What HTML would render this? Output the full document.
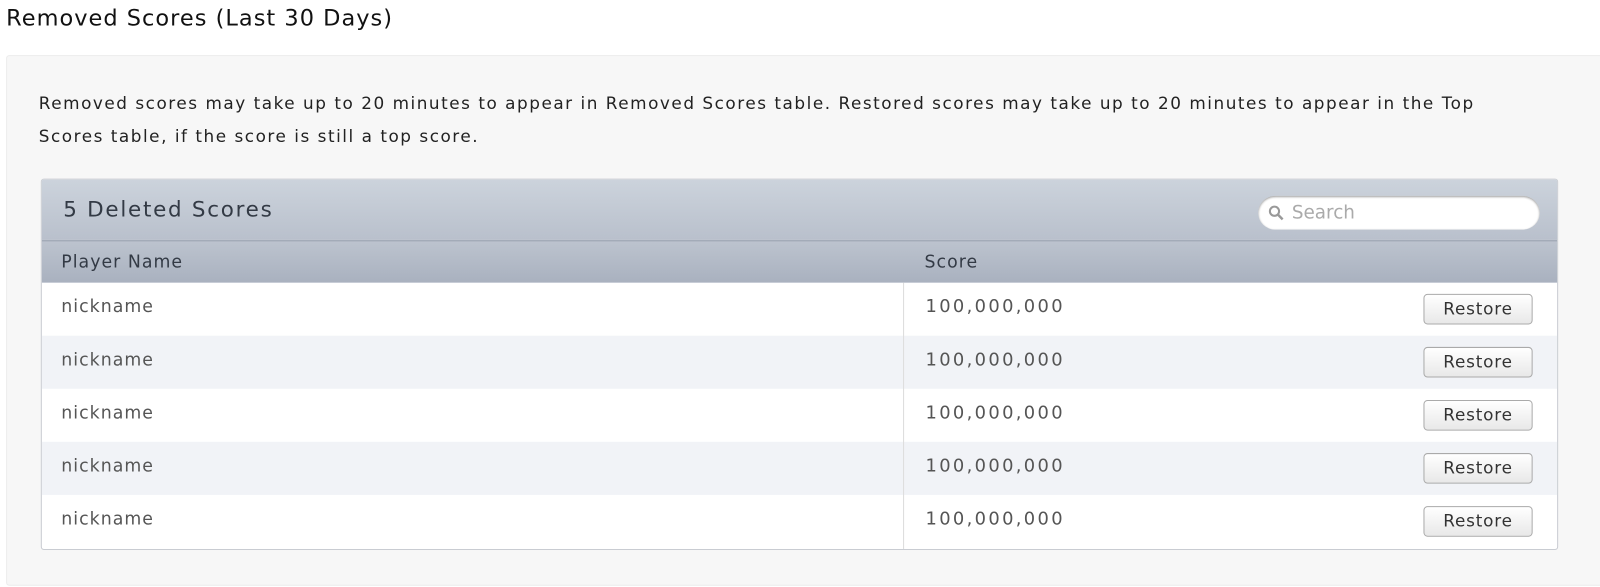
<!DOCTYPE html>
<html><head><meta charset="utf-8"><style>
*{box-sizing:border-box;margin:0;padding:0}
body{width:1600px;height:586px;background:#fff;font-family:"DejaVu Sans","Liberation Sans",sans-serif;position:relative;overflow:hidden}
#w{position:absolute;left:0;top:0;width:1568px;height:575px;transform:scale(1.0204);transform-origin:0 0}
h1{position:absolute;left:6px;top:6px;font-size:22px;font-weight:normal;color:#111;letter-spacing:1px}
.panel{position:absolute;left:6px;top:54px;width:1588px;height:520px;background:#f7f7f7;border:1px solid #ececec;border-radius:3px}
.desc{position:absolute;left:38px;top:86px;white-space:nowrap;font-size:16.5px;line-height:32px;color:#222;letter-spacing:1.5px}
.table{position:absolute;left:40px;top:175px;width:1487px;height:364px;border:1px solid #c9ccd2;border-radius:3px;background:#fff;overflow:hidden}
.hdr{height:61px;background:linear-gradient(#ccd3dc,#b9c0cc);border-bottom:2px solid #a3abb8;position:relative}
.hdr .t{position:absolute;left:21px;top:17px;font-size:21px;color:#333a45;letter-spacing:1.7px}
.search{position:absolute;left:1192px;top:16px;width:276px;height:33px;background:#fff;border-radius:17px;box-shadow:inset 0 1px 2px #999;font-size:18px;color:#aaa;padding:6px 0 0 33px}
.search svg{position:absolute;left:10px;top:9px}
.ch{height:40px;background:linear-gradient(#bcc3ce,#a9b1bf);position:relative;font-size:17px;color:#333a45;letter-spacing:1px}
.ch span{position:absolute;top:10px}
.row{height:52px;position:relative;font-size:17px;color:#555;letter-spacing:1px}
.row:nth-child(even){background:#f1f3f7}
.row span{position:absolute;top:14px}
.row span.n{letter-spacing:2.3px;font-size:17.5px}
.div{position:absolute;left:844px;top:101px;bottom:0;width:1px;background:#ddd}
.btn{position:absolute;left:1354px;top:11px;width:107px;height:30px;border:1px solid #aaa;border-radius:4px;background:linear-gradient(#fff,#e8e8e8);font-size:16.5px;color:#333;text-align:center;line-height:28px;letter-spacing:0.8px}
</style></head><body><div id="w">
<h1>Removed Scores (Last 30 Days)</h1>
<div class="panel"></div>
<div class="desc">Removed scores may take up to 20 minutes to appear in Removed Scores table. Restored scores may take up to 20 minutes to appear in the Top<br>Scores table, if the score is still a top score.</div>
<div class="table">
<div class="hdr"><div class="t">5 Deleted Scores</div>
<div class="search"><svg width="16" height="16" viewBox="0 0 16 16"><circle cx="6" cy="6" r="4.5" fill="none" stroke="#999" stroke-width="2"/><path d="M9.5 9.5L14 14" stroke="#999" stroke-width="2.4"/></svg>Search</div></div>
<div class="ch"><span style="left:19px">Player Name</span><span style="left:865px">Score</span></div>
<div>
<div class="row"><span style="left:19px">nickname</span><span class="n" style="left:866px">100,000,000</span><div class="btn">Restore</div></div>
<div class="row"><span style="left:19px">nickname</span><span class="n" style="left:866px">100,000,000</span><div class="btn">Restore</div></div>
<div class="row"><span style="left:19px">nickname</span><span class="n" style="left:866px">100,000,000</span><div class="btn">Restore</div></div>
<div class="row"><span style="left:19px">nickname</span><span class="n" style="left:866px">100,000,000</span><div class="btn">Restore</div></div>
<div class="row"><span style="left:19px">nickname</span><span class="n" style="left:866px">100,000,000</span><div class="btn">Restore</div></div>
</div>
<div class="div"></div>
</div>
</div></body></html>
